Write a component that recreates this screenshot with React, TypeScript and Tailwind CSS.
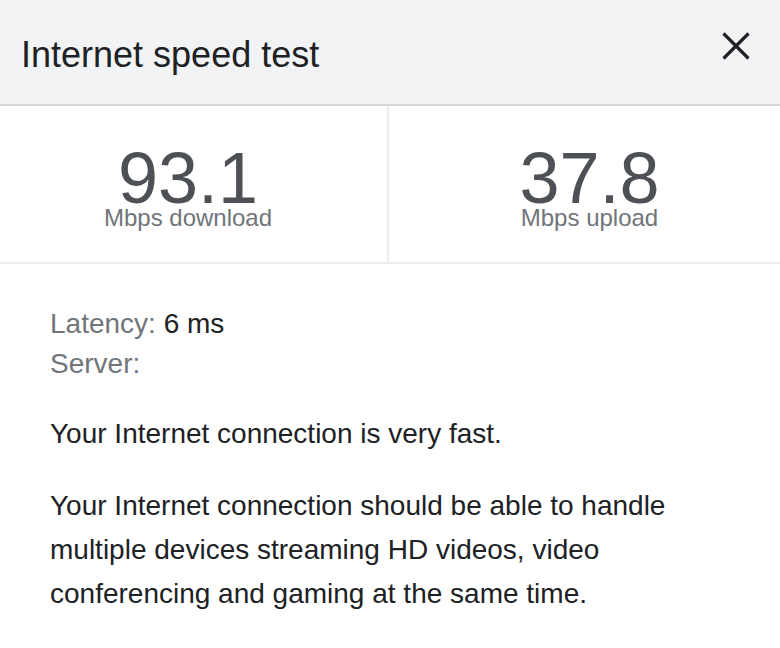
import React from "react";

const stats = [
  { value: "93.1", label: "Mbps download", pad: "pr-[11px]" },
  { value: "37.8", label: "Mbps upload", pad: "pl-[10px]" },
];

function CloseIcon() {
  return (
    <svg width="28" height="28" viewBox="0 0 28 28" fill="none" stroke="#202124" strokeWidth="3.2">
      <line x1="1.5" y1="1.5" x2="26.5" y2="26.5" />
      <line x1="26.5" y1="1.5" x2="1.5" y2="26.5" />
    </svg>
  );
}

export default function App() {
  return (
    <div className="w-[780px] h-[648px] bg-white font-['Liberation_Sans',Arial,sans-serif] overflow-hidden">
      {/* header */}
      <div className="h-[106px] bg-[#f1f3f4] border-b-2 border-[#d4d6d8] flex justify-between items-start">
        <h1 className="pl-[21px] pt-[34px] text-[36px] leading-[41px] text-[#202124]">Internet speed test</h1>
        <button className="mt-[32px] mr-[30px]">
          <CloseIcon />
        </button>
      </div>

      {/* download / upload */}
      <div className="grid grid-cols-[389px_1fr] h-[158px] border-b-2 border-[#ececec]">
        {stats.map((s, i) => (
          <div
            key={s.label}
            className={`flex flex-col items-center pt-[43px] ${s.pad} ${i === 0 ? "border-r-2 border-[#ececec]" : ""}`}
          >
            <div className="text-[72px] leading-[58px] text-[#4d5156]">{s.value}</div>
            <div className="text-[24px] leading-[22px] text-[#70757a]">{s.label}</div>
          </div>
        ))}
      </div>

      {/* details */}
      <div className="px-[50px] pt-[40px] text-[28px] text-[#202124]">
        <div className="leading-[40px]">
          <div>
            <span className="text-[#70757a]">Latency:</span> 6 ms
          </div>
          <div className="text-[#70757a]">Server:</div>
        </div>
        <p className="mt-[28px] leading-[44px]">Your Internet connection is very fast.</p>
        <p className="mt-[28px] leading-[44px]">
          Your Internet connection should be able to handle multiple devices streaming HD videos, video
          conferencing and gaming at the same time.
        </p>
      </div>
    </div>
  );
}
